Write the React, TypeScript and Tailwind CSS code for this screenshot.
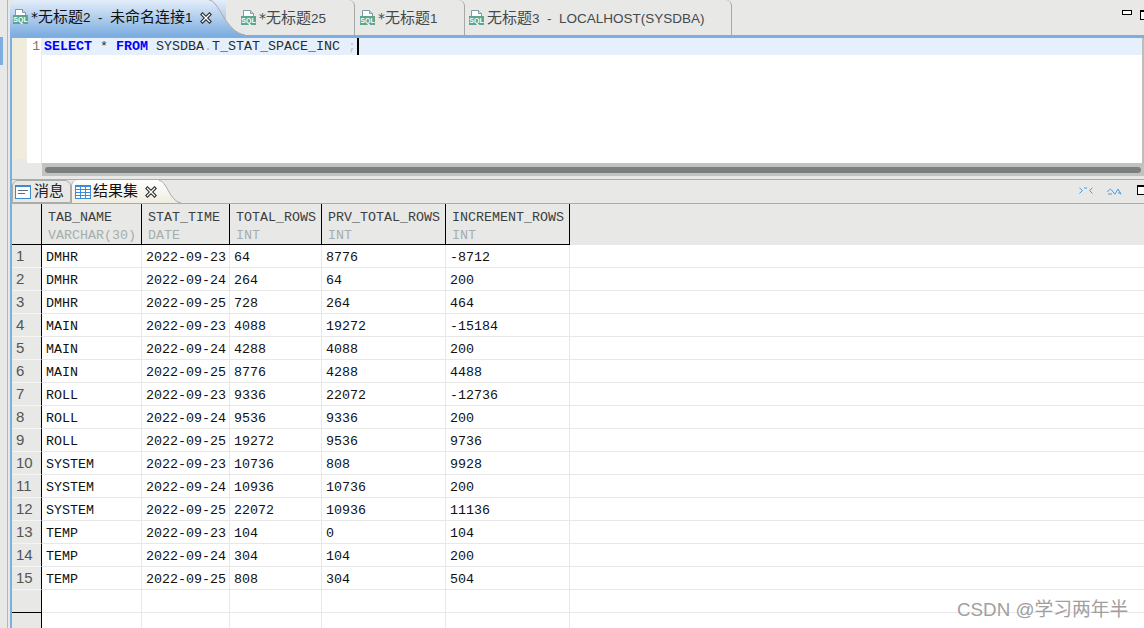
import React from 'react';

const rows = [
  ['DMHR', '2022-09-23', '64', '8776', '-8712'],
  ['DMHR', '2022-09-24', '264', '64', '200'],
  ['DMHR', '2022-09-25', '728', '264', '464'],
  ['MAIN', '2022-09-23', '4088', '19272', '-15184'],
  ['MAIN', '2022-09-24', '4288', '4088', '200'],
  ['MAIN', '2022-09-25', '8776', '4288', '4488'],
  ['ROLL', '2022-09-23', '9336', '22072', '-12736'],
  ['ROLL', '2022-09-24', '9536', '9336', '200'],
  ['ROLL', '2022-09-25', '19272', '9536', '9736'],
  ['SYSTEM', '2022-09-23', '10736', '808', '9928'],
  ['SYSTEM', '2022-09-24', '10936', '10736', '200'],
  ['SYSTEM', '2022-09-25', '22072', '10936', '11136'],
  ['TEMP', '2022-09-23', '104', '0', '104'],
  ['TEMP', '2022-09-24', '304', '104', '200'],
  ['TEMP', '2022-09-25', '808', '304', '504'],
  ['', '', '', '', ''],
  ['', '', '', '', ''],
];

const columns = [
  { name: 'TAB_NAME', type: 'VARCHAR(30)', width: 'w-[100px]' },
  { name: 'STAT_TIME', type: 'DATE', width: 'w-[88px]' },
  { name: 'TOTAL_ROWS', type: 'INT', width: 'w-[92px]' },
  { name: 'PRV_TOTAL_ROWS', type: 'INT', width: 'w-[124px]' },
  { name: 'INCREMENT_ROWS', type: 'INT', width: 'w-[124px]' },
];

const SqlIcon = () => (
  <svg width="15" height="16" viewBox="0 0 15 16" className="mt-[-1px] shrink-0">
    <path d="M2.5 .5h7l3 3v4h-10z" fill="#fff" stroke="#7d9aa8" />
    <path d="M9.5 .5v3h3" fill="#cfe0ea" stroke="#7d9aa8" />
    <rect x="0" y="6" width="15" height="9" fill="#5fa58e" />
    <text x="7.5" y="13" textAnchor="middle" fontSize="7" fontWeight="700" fill="#fff" fontFamily="'Liberation Sans', sans-serif">SQL</text>
  </svg>
);

const CloseIcon = () => (
  <svg width="12" height="12" viewBox="0 0 12 12" className="shrink-0">
    <path d="M2.5 2.5l7 7M9.5 2.5l-7 7" stroke="#222" strokeWidth="3.4" strokeLinecap="square" />
    <path d="M2.5 2.5l7 7M9.5 2.5l-7 7" stroke="#fff" strokeWidth="1.4" strokeLinecap="square" />
  </svg>
);

// latin part of a tab title is a bit smaller than the chinese part
const Lat = ({ children }: { children: React.ReactNode }) => <span className="text-[13.5px]">{children}</span>;
const Star = () => <span className="font-['DejaVu_Sans',sans-serif] text-[14px]">*</span>;

const Tab = ({ children, width }: { children: React.ReactNode; width: string }) => (
  <div className={`flex h-[35px] items-center gap-[3px] rounded-tr-[6px] border-r border-[#a8a8a6] pt-[1px] text-[15px] text-[#44494d] ${width}`}>
    <SqlIcon />
    <span className="whitespace-pre">{children}</span>
  </div>
);

export default function App() {
  return (
    <div className="relative flex h-[628px] w-[1144px] overflow-hidden bg-white font-['Liberation_Sans','Noto_Sans_CJK_SC',sans-serif]">
      {/* left strip */}
      <div className="relative flex w-[10px] shrink-0 flex-col bg-[#e8e8e6]">
        <div className="h-[37px]" />
        <div className="h-[28px] w-[3px] bg-[#7eaee0]" />
        <div className="absolute top-0 left-[7px] h-full w-px bg-[#b5b5b3]" />
      </div>

      <div className="flex min-w-0 flex-1 flex-col">
        {/* editor tabs */}
        <div className="flex h-[35px] shrink-0 items-start overflow-hidden bg-[#e8e8e6]">
          <div className="relative flex h-[35px] w-[216px] shrink-0 items-center rounded-tl-[6px] bg-gradient-to-b from-[#e4eefa] to-[#7eaee0] pl-[3px] text-[15px] text-[#111]">
            <SqlIcon />
            <span className="ml-[3px] whitespace-pre"><Star />无标题<Lat>2  -  </Lat>未命名连接<Lat>1</Lat></span>
            <span className="relative z-10 ml-[7px]"><CloseIcon /></span>
            <svg width="40" height="35" viewBox="0 0 40 35" className="absolute top-0 left-[197px]">
              <defs>
                <linearGradient id="activeTab" x1="0" y1="0" x2="0" y2="1">
                  <stop offset="0" stopColor="#e4eefa" />
                  <stop offset="1" stopColor="#7eaee0" />
                </linearGradient>
              </defs>
              <path d="M0 0h2C12 0 18 32 38 35H0z" fill="url(#activeTab)" />
              <path d="M2 0C12 0 18 32 38 35" fill="none" stroke="#a8a8a6" />
            </svg>
          </div>
          <Tab width="w-[129px] pl-[15px]"><Star />无标题<Lat>25</Lat></Tab>
          <Tab width="w-[110px] pl-[5px]"><Star />无标题<Lat>1</Lat></Tab>
          <Tab width="w-[267px] pl-[4px]">无标题<Lat>3  -  LOCALHOST(SYSDBA)</Lat></Tab>
          <div className="mr-[-6px] flex flex-1 items-start justify-end gap-[8px] pt-[10px]">
            <div className="h-[5px] w-[10px] border border-black bg-white" />
            <div className="h-[10px] w-[10px] border border-t-2 border-black bg-white" />
          </div>
        </div>
        <div className="h-[3px] shrink-0 bg-[#7eaee0]" />

        <div className="flex min-h-0 flex-1 flex-col border-l-2 border-[#7eaee0]">
          {/* sql editor */}
          <div className="flex h-[125px] shrink-0">
            <div className="w-[15px] shrink-0 bg-[#e8e8e6]">
              <div className="h-[121px] bg-[#efecdd]" />
            </div>
            <div className="w-[15px] shrink-0 border-r border-[#ebebeb] pr-[1px] text-right font-['Liberation_Mono',monospace] text-[13px] leading-[17px] text-[#787878]">1</div>
            <div className="min-w-0 flex-1">
              <div className="flex h-[17px] items-center bg-[#e6f0fc] pl-[2px] font-['Liberation_Mono',monospace] text-[13.33px] leading-[17px] whitespace-pre text-[#2b2b2b]">
                <span className="font-bold text-[#0000ff]">SELECT</span> * <span className="font-bold text-[#0000ff]">FROM</span> SYSDBA<span className="text-[#b0b0b0]">.</span>T_STAT_SPACE_INC <span className="text-[#c4c4c4]">;</span>
                <span className="ml-[1px] h-[17px] w-[2px] bg-black" />
              </div>
            </div>
            <div className="w-[2px] shrink-0 bg-[#bdbdbb]" />
          </div>

          {/* horizontal scrollbar */}
          <div className="flex h-[13px] shrink-0">
            <div className="w-[30px] shrink-0 bg-[#e8e8e6]" />
            <div className="flex-1 bg-[#c2c3c1] pt-[4px] pr-[3px] pl-[3px]">
              <div className="h-[6px] w-full rounded-full bg-[#7a7f7f]" />
            </div>
          </div>
          <div className="h-[3px] shrink-0 bg-[#e8e8e6]" />
          <div className="h-px shrink-0 bg-[#ababa9]" />

          {/* result tabs */}
          <div className="flex h-[23px] shrink-0 items-start bg-[#e8e8e6]">
            <div className="flex h-[23px] w-[59px] shrink-0 items-center gap-[3px] rounded-t-[6px] border border-[#ababa9] pl-[2px] text-[15px] text-[#222]">
              <svg width="16" height="14" viewBox="0 0 16 14" className="shrink-0">
                <rect x=".5" y=".5" width="15" height="13" fill="#fff" stroke="#3d8ad6" />
                <path d="M0 1.5h16" stroke="#3d8ad6" />
                <path d="M3 5.5h10M3 8.5h7" stroke="#5a6c80" />
              </svg>
              <span>消息</span>
            </div>
            <div className="relative flex h-[23px] w-[88px] shrink-0 items-center rounded-tl-[6px] border-l border-[#ababa9] bg-gradient-to-b from-white to-[#efece0] pl-[3px] text-[15px] text-[#111]">
              <svg width="16" height="14" viewBox="0 0 16 14" className="shrink-0">
                <rect x=".5" y=".5" width="15" height="13" fill="#fff" stroke="#3d8ad6" />
                <path d="M.5 1.5h15M.5 4.5h15M.5 7.5h15M.5 10.5h15M5.5 .5v13M10.5 .5v13" stroke="#3d8ad6" />
              </svg>
              <span className="ml-[2px] whitespace-nowrap">结果集</span>
              <span className="relative z-10 ml-[7px]"><CloseIcon /></span>
              <svg width="24" height="23" viewBox="0 0 24 23" className="absolute top-0 left-[85px]">
                <defs>
                  <linearGradient id="resultTab" x1="0" y1="0" x2="0" y2="1">
                    <stop offset="0" stopColor="#ffffff" />
                    <stop offset="1" stopColor="#efece0" />
                  </linearGradient>
                </defs>
                <path d="M0 0h2C10 0 12 21 24 23H0z" fill="url(#resultTab)" />
                <path d="M2 .5C10 .5 12 21 24 23" fill="none" stroke="#ababa9" />
              </svg>
            </div>
            <div className="mr-[-3px] flex flex-1 items-start justify-end pt-[5px]">
              <svg width="14" height="8" viewBox="0 0 14 8" className="mt-[2px] mr-[14px]" fill="none" stroke="#4a9be8">
                <path d="M.5 1l3 2.5-3 3M13.5 1l-3 2.5 3 3M5 1h3" />
              </svg>
              <svg width="15" height="8" viewBox="0 0 15 8" className="mt-[2px] mr-[15px]" fill="none" stroke="#4a9be8">
                <path d="M.5 5C2 1.5 4 2 5 3.5M5 3.5l3 4M8 7l3-5 3 5.5M11 6h3M1 7h4" />
              </svg>
              <div className="h-[10px] w-[10px] border border-t-2 border-black bg-white" />
            </div>
          </div>
          <div className="h-px shrink-0 bg-[#ababa9]" />

          {/* result grid */}
          <div className="min-h-0 flex-1 overflow-hidden font-['Liberation_Mono',monospace]">
            <div className="flex h-[41px] bg-[#e8e8e6]">
              <div className="h-[41px] w-[30px] shrink-0 border-r border-b border-black" />
              {columns.map((c) => (
                <div key={c.name} className={`h-[41px] shrink-0 border-r border-b border-black pt-[4px] pl-[6px] text-[13.33px] leading-[18px] ${c.width}`}>
                  <div className="mt-[1px] text-[#3a3f42]">{c.name}</div>
                  <div className="text-[#a3aeb0]">{c.type}</div>
                </div>
              ))}
            </div>
            {rows.map((r, i) => (
              <div key={i} className="flex h-[23px]">
                <div className={`h-[23px] w-[30px] shrink-0 border-r border-b border-r-black bg-[#e8e8e6] pl-[4px] font-['Liberation_Sans',sans-serif] text-[15px] leading-[21px] text-[#555] ${i === 15 ? 'border-b-black' : 'border-b-[#f4f4f2]'}`}>
                  {i < 15 ? i + 1 : ''}
                </div>
                {columns.map((c, j) => (
                  <div key={c.name} className={`h-[23px] shrink-0 border-r border-b border-[#e8e8e8] pt-[2px] pl-[4px] text-[13.33px] leading-[22px] text-[#111] ${c.width}`}>
                    {r[j]}
                  </div>
                ))}
                <div className="h-[23px] flex-1 border-b border-[#e8e8e8]" />
              </div>
            ))}
          </div>
        </div>
      </div>

      {/* watermark */}
      <div className="absolute top-[597px] left-[957px] text-[18.8px] leading-[26px] whitespace-nowrap text-[#a0a0a0]">CSDN @学习两年半</div>
    </div>
  );
}
